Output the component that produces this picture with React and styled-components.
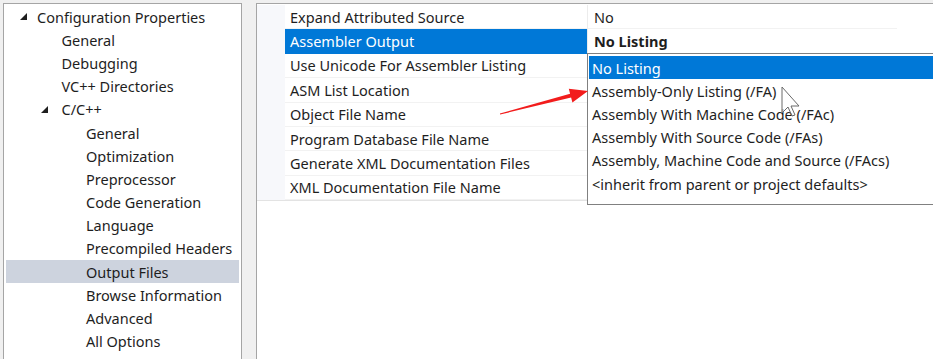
import styled, { createGlobalStyle } from 'styled-components';

const GlobalStyle = createGlobalStyle`
    html, body {
        margin: 0;
        padding: 0;
        overflow: hidden;
        background-color: #f0f0f0;
    }
    body {
        font-family: "Noto Sans", "Open Sans", sans-serif;
        font-size: 14.5px;
        color: #1e1e1e;
    }
`

const Window = styled.div`
    position: relative;
    display: flex;
    gap: 14px;
    height: 100vh;
    padding: 3px 0 0 3px;
    box-sizing: border-box;
`

const TreePanel = styled.div`
    width: 237px;
    flex-shrink: 0;
    background-color: #ffffff;
    border: 1px solid #a5a5a5;
    border-bottom: 0;
    padding-top: 1px;
`

const TreeRow = styled.div`
    display: flex;
    align-items: center;
    height: 23.2px;
    margin: 0 2px;
    padding-left: ${p => 31 + p.level * 24.5}px;
    background-color: ${p => (p.selected ? '#cdd3de' : 'transparent')};
    white-space: nowrap;
`

const Expander = styled.svg`
    width: 7px;
    height: 7px;
    margin-left: -${p => (p.level ? 21 : 17)}px;
    margin-right: ${p => (p.level ? 14 : 10)}px;
`

const GridPanel = styled.div`
    position: relative;
    flex: 1;
    background-color: #ffffff;
    border-top: 1px solid #a5a5a5;
    border-left: 1px solid #a5a5a5;
`

const PropGrid = styled.div`
    display: flex;
    flex-direction: column;
    padding-top: 1px;
    border-bottom: 1px solid #e3e3e3;
    width: 640px;
`

const PropRow = styled.div`
    display: flex;
    height: 24.4px;
`

const Gutter = styled.div`
    width: 28px;
    background-color: #f7f8fb;
`

const NameCell = styled.div`
    width: 297px;
    padding-left: 5px;
    display: flex;
    align-items: center;
    border-bottom: 1px solid ${p => (p.selected ? 'transparent' : '#f2f2f2')};
    border-right: 1px solid #ececec;
    background-color: ${p => (p.selected ? '#0078d7' : 'transparent')};
    color: ${p => (p.selected ? '#ffffff' : 'inherit')};
    white-space: nowrap;
`

const ValueCell = styled.div`
    flex: 1;
    padding-left: 6px;
    display: flex;
    align-items: center;
    border-bottom: 1px solid #f2f2f2;
    font-weight: ${p => (p.bold ? 700 : 400)};
    white-space: nowrap;
`

const Dropdown = styled.div`
    position: absolute;
    left: 330px;
    top: 49px;
    width: 360px;
    padding: 2px 0 9px 1px;
    background-color: #ffffff;
    border: 1px solid #808080;
`

const Option = styled.div`
    display: flex;
    align-items: center;
    height: 23.2px;
    padding-left: 3px;
    background-color: ${p => (p.active ? '#0078d7' : 'transparent')};
    color: ${p => (p.active ? '#ffffff' : 'inherit')};
    white-space: nowrap;
`

const Overlay = styled.svg`
    position: absolute;
    left: 0;
    top: 0;
    width: 933px;
    height: 359px;
    pointer-events: none;
`

const treeItems = [
    { label: 'Configuration Properties', level: 0, open: true },
    { label: 'General', level: 1 },
    { label: 'Debugging', level: 1 },
    { label: 'VC++ Directories', level: 1 },
    { label: 'C/C++', level: 1, open: true },
    { label: 'General', level: 2 },
    { label: 'Optimization', level: 2 },
    { label: 'Preprocessor', level: 2 },
    { label: 'Code Generation', level: 2 },
    { label: 'Language', level: 2 },
    { label: 'Precompiled Headers', level: 2 },
    { label: 'Output Files', level: 2, selected: true },
    { label: 'Browse Information', level: 2 },
    { label: 'Advanced', level: 2 },
    { label: 'All Options', level: 2 },
]

const props = [
    { name: 'Expand Attributed Source', value: 'No' },
    { name: 'Assembler Output', value: 'No Listing', selected: true },
    { name: 'Use Unicode For Assembler Listing', value: '' },
    { name: 'ASM List Location', value: '' },
    { name: 'Object File Name', value: '' },
    { name: 'Program Database File Name', value: '' },
    { name: 'Generate XML Documentation Files', value: '' },
    { name: 'XML Documentation File Name', value: '' },
]

const options = [
    'No Listing',
    'Assembly-Only Listing (/FA)',
    'Assembly With Machine Code (/FAc)',
    'Assembly With Source Code (/FAs)',
    'Assembly, Machine Code and Source (/FAcs)',
    '<inherit from parent or project defaults>',
]

const App = () => {
  return (
    <>
      <GlobalStyle />
      <Window>
        <TreePanel>
          {treeItems.map((item, i) => (
            <TreeRow key={i} level={item.level} selected={item.selected}>
              {item.open && (
                <Expander viewBox="0 0 7 7" level={item.level}>
                  <polygon points="7,0 7,7 0,7" fill="#1e1e1e" />
                </Expander>
              )}
              {item.label}
            </TreeRow>
          ))}
        </TreePanel>
        <GridPanel>
          <PropGrid>
            {props.map((p, i) => (
              <PropRow key={i}>
                <Gutter />
                <NameCell selected={p.selected}>{p.name}</NameCell>
                <ValueCell bold={p.selected}>{p.value}</ValueCell>
              </PropRow>
            ))}
          </PropGrid>
          <Dropdown>
            {options.map((o, i) => (
              <Option key={i} active={i === 0}>{o}</Option>
            ))}
          </Dropdown>
        </GridPanel>
        <Overlay viewBox="0 0 933 359">
          <polygon
            points="499.9,113.5 570.1,93.7 568.8,88.8 588,91 572.4,102.4 571.1,97.5 500.1,114.5"
            fill="#f21c1c"
          />
          <path
            d="M782 87 L782 113 L788 107 L792 116 L795 115 L791 106 L799 106 Z"
            fill="rgba(255,255,255,0.6)"
            stroke="#6a6a6a"
            strokeWidth="1"
            strokeLinejoin="round"
          />
        </Overlay>
      </Window>
    </>
  );
}

export default App;
